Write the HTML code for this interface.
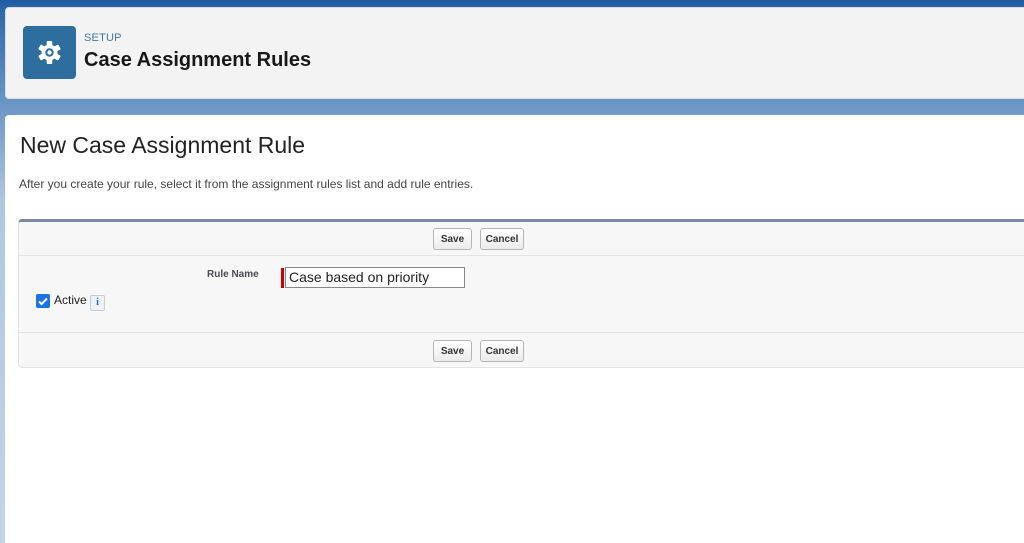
<!DOCTYPE html>
<html><head><meta charset="utf-8"><style>
*{margin:0;padding:0;box-sizing:border-box}
html,body{width:1024px;height:543px;overflow:hidden}
body{background:linear-gradient(#1e5aa0 0px,#2f69aa 10px,#4d80bb 60px,#7099c8 112px,#b0c6e2 200px,#c3d4ea 543px);font-family:"Liberation Sans",Arial,sans-serif;position:relative}
.hdr{position:absolute;left:5px;top:7px;width:1030px;height:92px;background:#f3f3f3;border-radius:4px;border:1px solid #dcdcdc}
.icon{position:absolute;left:17px;top:18px;width:53px;height:53px;background:#2d6e9e;border-radius:4px}
.setup{position:absolute;left:78px;top:24px;font-size:11px;color:#3e78a8;letter-spacing:.2px}
.title{position:absolute;left:78px;top:41px;font-size:20px;font-weight:bold;color:#181818}
.panel{position:absolute;left:5px;top:115px;width:1030px;height:440px;background:#fff;border-radius:4px 0 0 0}
h1{position:absolute;left:15px;top:17px;font-size:23px;font-weight:normal;color:#222}
.desc{position:absolute;left:14px;top:62px;font-size:12px;color:#444}
.box{position:absolute;left:13px;top:104px;width:1020px;height:149px;background:#f7f7f7;border-top:3px solid #7a8aa8;border-left:1px solid #e3e3e3;border-bottom:1px solid #e3e3e3;border-radius:4px 0 0 4px}
.bar{position:absolute;left:0;width:100%;height:34px;border-bottom:1px solid #e3e3e3}
.btn{position:absolute;height:22px;border:1px solid #b5b5b5;border-radius:3px;background:linear-gradient(#fff,#ececec);font-size:10px;font-weight:bold;color:#333;line-height:22px;text-align:center;font-family:"Liberation Sans",Arial,sans-serif}
</style></head><body>
<div class="hdr">
<div class="icon"><svg width="53" height="53" viewBox="0 0 53 53"><g transform="translate(26.5,26.5)" fill="#fff"><g id="t"><rect x="-2.8" y="-11.5" width="5.6" height="5" rx="1"/></g><use href="#t" transform="rotate(60)"/><use href="#t" transform="rotate(120)"/><use href="#t" transform="rotate(180)"/><use href="#t" transform="rotate(240)"/><use href="#t" transform="rotate(300)"/><circle r="8"/><circle r="4.2" fill="#2d6e9e"/><circle r="2.2"/></g></svg></div>
<div class="setup">SETUP</div>
<div class="title">Case Assignment Rules</div>
</div>
<div class="panel">
<h1>New Case Assignment Rule</h1>
<div class="desc">After you create your rule, select it from the assignment rules list and add rule entries.</div>
<div class="box">
<div class="bar" style="top:0"><div class="btn" style="left:414px;top:6px;width:39px">Save</div><div class="btn" style="left:461px;top:6px;width:44px">Cancel</div></div>
<div style="position:absolute;left:188px;top:47px;font-size:10px;font-weight:bold;color:#4a4a56">Rule Name</div>
<div style="position:absolute;left:262px;top:46px;width:3px;height:20px;background:#c00"></div>
<div style="position:absolute;left:266px;top:45px;width:180px;height:21px;border:1px solid #888;background:#fff;font-size:14px;color:#222;padding:1px 0 0 3px">Case based on priority</div>
<div style="position:absolute;left:17px;top:72px;width:14px;height:14px;background:#1a73e8;border-radius:2px"><svg width="14" height="14"><path d="M3 7.5l2.6 2.6L11 4.5" stroke="#fff" stroke-width="2" fill="none"/></svg></div>
<div style="position:absolute;left:35px;top:71px;font-size:12px;color:#222">Active</div>
<div style="position:absolute;left:71px;top:73px;width:15px;height:16px;border:1px solid #ccc;border-radius:2px;background:#eef2f7;font-size:10px;color:#2a6ab8;text-align:center;line-height:14px;font-family:'Liberation Serif',serif;font-weight:bold">i</div>
<div class="bar" style="top:110px;border-top:1px solid #e3e3e3;border-bottom:none;height:36px"><div class="btn" style="left:414px;top:7px;width:39px">Save</div><div class="btn" style="left:461px;top:7px;width:44px">Cancel</div></div>
</div>
</div>
</body></html>
